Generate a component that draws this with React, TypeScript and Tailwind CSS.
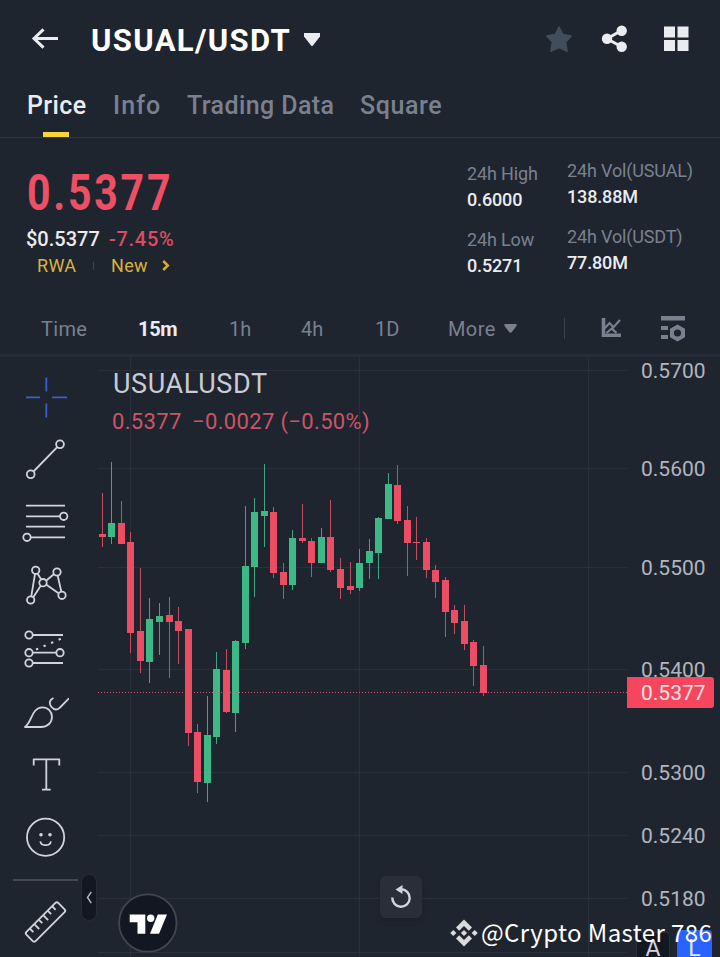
import type { ReactNode } from "react";

// x, high, low, body top, body bottom, direction
type Candle = [number, number, number, number, number, "up" | "down"];

const candles: Candle[] = [
  [102.5, 493, 547, 534, 537, "down"],
  [111.5, 462, 544, 523, 537, "up"],
  [121.5, 501, 544, 523, 544, "down"],
  [130.5, 532, 653, 542, 633, "down"],
  [140.5, 568, 673, 631, 661, "down"],
  [149.5, 598, 683, 619, 662, "up"],
  [159.5, 603, 655, 616, 622, "up"],
  [169.5, 597, 678, 615, 622, "down"],
  [178.5, 607, 664, 621, 631, "down"],
  [188.5, 629, 746, 629, 733, "down"],
  [197.5, 724, 793, 732, 782, "down"],
  [207.5, 696, 802, 735, 783, "up"],
  [216.5, 652, 744, 669, 737, "up"],
  [226.5, 649, 713, 670, 712, "down"],
  [235.5, 640, 732, 641, 713, "up"],
  [245.5, 506, 649, 566, 643, "up"],
  [254.5, 498, 597, 512, 567, "up"],
  [264.5, 464, 547, 511, 516, "up"],
  [273.5, 507, 578, 512, 573, "down"],
  [283.5, 563, 599, 572, 585, "down"],
  [292.5, 530, 590, 538, 585, "up"],
  [302.5, 504, 543, 538, 541, "down"],
  [311.5, 538, 577, 541, 563, "down"],
  [321.5, 528, 563, 537, 563, "up"],
  [330.5, 500, 572, 537, 570, "down"],
  [340.5, 558, 599, 569, 588, "down"],
  [350.5, 562, 594, 586, 590, "down"],
  [359.5, 549, 591, 563, 588, "up"],
  [369.5, 539, 579, 551, 563, "up"],
  [378.5, 517, 579, 518, 553, "up"],
  [388.5, 473, 519, 484, 519, "up"],
  [397.5, 465, 524, 485, 521, "down"],
  [407.5, 506, 576, 520, 543, "down"],
  [416.5, 517, 560, 542, 543, "down"],
  [426.5, 538, 578, 542, 570, "down"],
  [435.5, 565, 598, 570, 582, "down"],
  [445.5, 577, 637, 580, 612, "down"],
  [454.5, 605, 634, 610, 623, "down"],
  [464.5, 605, 650, 621, 644, "down"],
  [473.5, 640, 686, 642, 666, "down"],
  [483.5, 646, 696, 665, 693, "down"],
];

const priceLevels = [
  { y: 370.5, label: "0.5700" },
  { y: 468.5, label: "0.5600" },
  { y: 567.5, label: "0.5500" },
  { y: 669.5, label: "0.5400" },
  { y: 772.5, label: "0.5300" },
  { y: 835.5, label: "0.5240" },
  { y: 898.5, label: "0.5180" },
];

const CHART_TOP = 357;

function Header() {
  return (
    <header className="flex h-[78px] shrink-0 items-center pl-[31px] pr-[31px]">
      <svg width="28" height="22" viewBox="0 0 28 22" fill="none" stroke="#eaecef" strokeWidth="3">
        <path d="M27 10.500H3M12.500 1.300L3 10.500l9.500 9.200" />
      </svg>
      <h1 className="ml-[32px] w-[201px] pt-[3px] whitespace-nowrap text-[31px] leading-[40px] font-bold tracking-[1.35px] text-white">
        USUAL/USDT
      </h1>
      <svg className="ml-[12px]" width="16" height="13" viewBox="0 0 16 13" fill="#eaecef">
        <path d="M0 0h16v3.500L8.500 13h-1L0 3.500z" />
      </svg>
      <div className="ml-auto flex items-center">
        <svg width="28" height="28" viewBox="0 0 28 28" fill="#434c5a">
          <path
            d="M14 2l3.900 7.600 8.400 1.300-5.700 6.200 1.600 9.200L14 22.600l-8.200 3.700 1.600-9.200-5.700-6.200 8.400-1.300z"
            stroke="#434c5a"
            strokeWidth="1.500"
            strokeLinejoin="round"
          />
        </svg>
        <svg className="ml-[28px]" width="28" height="28" viewBox="0 0 28 28" fill="#eaecef">
          <path d="M20.500 5.500L6 13.700l14.500 8" fill="none" stroke="#eaecef" strokeWidth="3" />
          <circle cx="20.700" cy="5.700" r="5.200" />
          <circle cx="6" cy="13.700" r="5.200" />
          <circle cx="20.700" cy="21.800" r="5.200" />
        </svg>
        <svg className="mb-[2px] ml-[35px]" width="25" height="25" viewBox="0 0 25 25" fill="#eaecef">
          <path d="M0 0.500h11v11H0zM13.500 0.500h11v11h-11zM0 14h11v11H0zM13.500 14h11v11h-11z" />
        </svg>
      </div>
    </header>
  );
}

function Tabs() {
  return (
    <nav className="flex h-[60px] shrink-0 border-b border-[#2f3641] pl-[27px] text-[25px] leading-[56px] font-medium tracking-[0.4px] whitespace-nowrap text-[#79818f]">
      <div className="flex w-[86px] flex-col text-[#eaecef]">
        <span className="h-[54px]">Price</span>
        <span className="ml-[16px] h-[5px] w-[26px] bg-[#f8d33a]" />
      </div>
      <span className="w-[74px] tracking-[1.1px]">Info</span>
      <span className="w-[173px]">Trading Data</span>
      <span className="tracking-[0.6px]">Square</span>
    </nav>
  );
}

function Stat({ label, value }: { label: string; value: string }) {
  return (
    <div className="mb-[14px] text-[18px] leading-[26px] tracking-[-0.15px] whitespace-nowrap">
      <div className="text-[#79818f]">{label}</div>
      <div className="font-medium text-[#eaecef]">{value}</div>
    </div>
  );
}

function Summary() {
  return (
    <section className="flex h-[165px] shrink-0 pl-[27px]">
      <div className="w-[440px] pt-[24px]">
        <div className="h-[60px] origin-left scale-x-[0.82] pt-px text-[50px] leading-[60px] font-bold tracking-[3.4px] text-[#ec5064]">
          0.5377
        </div>
        <div className="mt-[4px] flex text-[20px] leading-[26px] font-medium">
          <span className="-ml-px w-[83px] text-[#eaecef]">$0.5377</span>
          <span className="tracking-[0.7px] text-[#dc4b60]">-7.45%</span>
        </div>
        <div className="flex items-center pl-[10px] text-[18px] leading-[27px] text-[#d9b23c]">
          <span className="w-[56px] tracking-[0.3px]">RWA</span>
          <span className="h-[8px] w-px bg-[#3c4450]" />
          <span className="ml-[17px] w-[51px] tracking-[0.3px]">New</span>
          <svg width="8" height="11" viewBox="0 0 8 11" fill="none" stroke="#d9a92e" strokeWidth="2.500">
            <path d="M1.200 1l4.600 4.500L1.200 10" />
          </svg>
        </div>
      </div>
      <div className="w-[100px] pt-[23px]">
        <Stat label="24h High" value="0.6000" />
        <Stat label="24h Low" value="0.5271" />
      </div>
      <div className="pt-[20px]">
        <Stat label="24h Vol(USUAL)" value="138.88M" />
        <Stat label="24h Vol(USDT)" value="77.80M" />
      </div>
    </section>
  );
}

function Intervals() {
  return (
    <div className="flex h-[54px] shrink-0 items-center border-b-[3px] border-[#272d38] pl-[41px] text-[20px] whitespace-nowrap text-[#79818f]">
      <span className="w-[97px] tracking-[0.3px]">Time</span>
      <span className="w-[91px] font-bold tracking-[-0.3px] text-[#eaecef]">15m</span>
      <span className="w-[72px]">1h</span>
      <span className="w-[74px]">4h</span>
      <span className="w-[73px]">1D</span>
      <span className="w-[56px] tracking-[0.4px]">More</span>
      <svg width="13" height="9" viewBox="0 0 13 9" fill="#79818f">
        <path d="M0.500 0h12v2L7.500 8.500h-2L0.500 2z" />
      </svg>
      <span className="ml-[47px] h-[21px] w-px bg-[#3a414d]" />
      <svg className="ml-[36px]" width="21" height="21" viewBox="0 0 21 21" fill="none" stroke="#79818f" strokeWidth="2.600">
        <path d="M2.500 0v17.300H20" strokeWidth="3.600" />
        <path d="M4 10l4.500-5 4 4.200L19 2M5.500 15l7-6M10 10l5.500 4.800" strokeWidth="2.200" />
      </svg>
      <svg className="ml-[38px]" width="26" height="27" viewBox="0 0 26 27" fill="#79818f">
        <path d="M1 1h24v4.500H1zM1 11h7v4H1zM1 20h7v4H1z" />
        <path
          fillRule="evenodd"
          d="M17.500 9.500l7.500 4.200v8.600l-7.500 4.200-7.500-4.200v-8.600zM17.500 14.400a3.600 3.600 0 1 0 0 7.200 3.600 3.600 0 0 0 0-7.200z"
        />
      </svg>
    </div>
  );
}

function ToolIcon({ children, color = "#d1d4dc" }: { children: ReactNode; color?: string }) {
  return (
    <svg
      className="shrink-0"
      width="48"
      height="48"
      viewBox="0 0 48 48"
      fill="none"
      stroke={color}
      strokeWidth="1.800"
      strokeLinejoin="round"
    >
      {children}
    </svg>
  );
}

function Toolbar() {
  return (
    <aside className="relative flex w-[98px] shrink-0 flex-col gap-[15px] pt-[16px] pl-[21px]">
      {/* crosshair */}
      <ToolIcon color="#3a5fd0">
        <path d="M25.300 4.500v14M25.300 30.500v14M5 24.300h14M31 24.300h15" />
      </ToolIcon>
      {/* trend line */}
      <ToolIcon>
        <path d="M12.500 35.500L36.200 11.200" />
        <circle cx="9.700" cy="38.300" r="3.900" />
        <circle cx="39" cy="8.300" r="3.900" />
      </ToolIcon>
      {/* fib retracement */}
      <ToolIcon>
        <path d="M5 6.700h39M5 17.300h34M5 27.700h39M10 38.300h34" />
        <circle cx="42.700" cy="17.300" r="3.700" />
        <circle cx="6" cy="38.300" r="3.700" />
      </ToolIcon>
      {/* xabcd pattern */}
      <ToolIcon>
        <path d="M14 12L10.300 34.200M16.700 11.700l3.300 5.600M12.300 35.200l7.400-11.500M25.300 18.500l7.500-6.300M25.400 22.700l12.200 8.600M36.700 13.800l3.600 15.700" />
        <circle cx="14.700" cy="8.300" r="3.700" />
        <circle cx="36" cy="10" r="3.700" />
        <circle cx="22" cy="20.700" r="3.700" />
        <circle cx="9.700" cy="38" r="3.700" />
        <circle cx="41" cy="33.300" r="3.700" />
      </ToolIcon>
      {/* long position */}
      <ToolIcon>
        <path d="M12 10h30M12 27.700h23M12 38h30" />
        <circle cx="8" cy="10" r="3.700" />
        <circle cx="8" cy="27.700" r="3.700" />
        <circle cx="39" cy="27.700" r="3.700" />
        <circle cx="8" cy="38" r="3.700" />
        <path d="M15 24.500l25-10.800" strokeWidth="2" strokeDasharray="2.400 5.800" />
      </ToolIcon>
      {/* brush */}
      <ToolIcon>
        <path d="M4 39C11 34 10.500 19.500 21.500 19.300C27 19.300 31 23.500 31 28.700C31 35 26 39 20 39Z" />
        <path d="M32.500 10C28 12 28 16 30.500 19C33 22 36.500 22.500 39 19.500L48 10.300" />
      </ToolIcon>
      {/* text */}
      <ToolIcon>
        <path d="M12.700 14.500V8.300h25.600v6.200M25.300 8.300v30.400M21 38.700h8.700" />
      </ToolIcon>
      {/* emoji */}
      <ToolIcon>
        <circle cx="24.600" cy="23.300" r="18.600" />
        <path d="M19.300 27.300c1 5.200 9.600 5.200 10.600 0" />
        <circle cx="20" cy="20.700" r="1.800" fill="#d1d4dc" stroke="none" />
        <circle cx="29" cy="20.700" r="1.800" fill="#d1d4dc" stroke="none" />
      </ToolIcon>
      <div className="-ml-[8px] mt-[2px] h-[2px] w-[65px] bg-[#434752]" />
      {/* measure */}
      <ToolIcon>
        <g transform="translate(0 1.500) rotate(-45 24.500 24.500)">
          <rect x="2" y="18" width="45" height="13" rx="2" />
          <path d="M8.800 18v5M15.100 18v7M21.400 18v5M27.700 18v7M34 18v5M40.300 18v5" />
        </g>
      </ToolIcon>
      <button className="absolute top-[518px] left-[82px] flex h-[45px] w-[14px] items-center justify-center rounded-[7px] bg-[#131722] ring-1 ring-[#272b36]">
        <svg width="7" height="13" viewBox="0 0 7 13" fill="none" stroke="#b2b5be" strokeWidth="1.500">
          <path d="M5.300 0.800L1.500 6.500l3.800 5.700" />
        </svg>
      </button>
    </aside>
  );
}

function CandleChart() {
  return (
    <svg className="block" width="622" height="600" viewBox="98 357 622 600" shapeRendering="crispEdges">
      <g stroke="#29303a">
        {priceLevels.map((p) => (
          <line key={p.label} x1="98" x2="627" y1={p.y} y2={p.y} />
        ))}
        <line x1="98" x2="627" y1="952.500" y2="952.500" />
        {[130.5, 359.5, 588.5].map((x) => (
          <line key={x} x1={x} x2={x} y1="357" y2="957" />
        ))}
      </g>
      {candles.map(([x, high, low, top, bottom, dir]) => (
        <g key={x}>
          <line x1={x} x2={x} y1={high} y2={low} stroke={dir === "up" ? "#3fa583" : "#c24e61"} />
          <rect x={x - 3.5} y={top} width="7" height={bottom - top} fill={dir === "up" ? "#3cb987" : "#eb4d65"} />
        </g>
      ))}
      <line x1="98" x2="627" y1="692.500" y2="692.500" stroke="#cf5a6c" strokeDasharray="1 2" />
    </svg>
  );
}

function TradingViewBadge() {
  return (
    <svg className="absolute top-[536px] left-[20px]" width="60" height="60" viewBox="118 893 60 60">
      <circle cx="147.800" cy="923" r="28.700" fill="#131722" stroke="#434651" strokeWidth="1.800" />
      <g fill="#fff">
        <path d="M129.700 914.600h15.600v19.200h-7.800v-11.500h-7.800z" />
        <circle cx="150.700" cy="918.200" r="3.700" />
        <path d="M157.800 914.600h9.200l-8 19.200h-9z" />
      </g>
    </svg>
  );
}

function Watermark() {
  return (
    <div className="absolute top-[558px] left-[352px] flex items-center">
      <svg className="mt-px" width="28" height="28" viewBox="0 0 28 28" fill="#d9dadc">
        <path d="M14 0.500l8 8-3.200 3.200L14 6.900l-4.800 4.800L6 8.500zM14 27.500l8-8-3.200-3.200-4.800 4.800-4.800-4.800L6 19.500zM14 10.900l3.100 3.100-3.100 3.100-3.100-3.100zM3.300 10.900L6.400 14l-3.100 3.100L0.200 14zM24.700 10.900l3.100 3.100-3.100 3.100-3.100-3.100z" />
      </svg>
      <span className="ml-[3px] font-['Noto_Sans_CJK_SC',sans-serif] text-[24px] leading-[34px] tracking-[0.4px] whitespace-nowrap text-white">
        @Crypto Master 786
      </span>
    </div>
  );
}

function Chart() {
  return (
    <div className="relative w-[622px] shrink-0">
      <CandleChart />
      <div className="absolute top-[10px] left-[15px] whitespace-nowrap">
        <div className="text-[27px] leading-[34px] tracking-[0.6px] text-[#c8ccd6]">USUALUSDT</div>
        <div className="mt-[7px] -ml-px flex text-[22px] leading-[28px] tracking-[0.35px] text-[#cc5467]">
          <span className="w-[80px]">0.5377</span>
          <span>−0.0027 (−0.50%)</span>
        </div>
      </div>
      {priceLevels.map((p) => (
        <span
          key={p.label}
          className="absolute left-[543px] text-[21px] leading-[24px] text-[#b2b5be]"
          style={{ top: p.y - CHART_TOP - 12 }}
        >
          {p.label}
        </span>
      ))}
      <span className="absolute top-[320px] left-[529px] h-[31px] w-[87px] rounded-r-[3px] bg-[#f6465d] pt-px pl-[14px] text-[21px] leading-[31px] text-[#fbe3e6]">
        0.5377
      </span>
      <TradingViewBadge />
      <button className="absolute top-[519px] left-[282px] flex h-[42px] w-[42px] items-center justify-center rounded-[6px] bg-[#2a2e39] shadow-md">
        <svg width="22" height="24" viewBox="0 0 22 24" fill="none" stroke="#d1d4dc" strokeWidth="2.400">
          <path d="M2.300 12.500a8.700 8.700 0 1 0 8.700-8.200" />
          <path d="M12.500 0v9L5.500 4.500z" fill="#d1d4dc" stroke="none" />
        </svg>
      </button>
      {/* auto / log scale switches, partly below the fold */}
      <span className="absolute top-[575px] left-[538px] h-[25px] w-[34px] overflow-hidden rounded-t-[4px] border border-b-0 border-[#2a2e39] bg-[#131722] pt-[3px] text-center text-[23px] leading-[26px] text-[#d1d4dc]">
        A
      </span>
      <span className="absolute top-[573px] left-[579px] h-[27px] w-[35px] overflow-hidden rounded-t-[4px] bg-[#2962ff] pt-[6px] text-center text-[23px] leading-[26px] text-[#dfe7ff]">
        L
      </span>
      <Watermark />
    </div>
  );
}

export default function App() {
  return (
    <div className="flex h-[957px] w-[720px] flex-col overflow-hidden bg-[#1f252f] font-[Roboto,sans-serif]">
      <Header />
      <Tabs />
      <Summary />
      <Intervals />
      <main className="flex h-[600px] shrink-0 overflow-hidden">
        <Toolbar />
        <Chart />
      </main>
    </div>
  );
}
